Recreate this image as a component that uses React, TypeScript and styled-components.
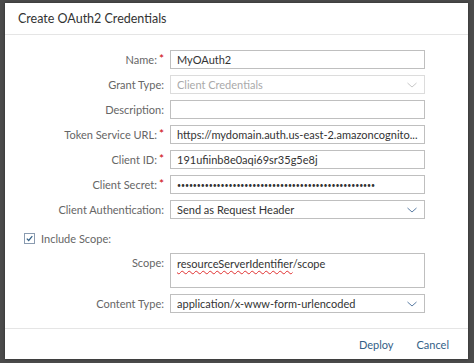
import React from "react";
import styled, {createGlobalStyle} from "styled-components";

const GlobalStyle = createGlobalStyle`
  html, body {
    margin: 0;
    padding: 0;
    background: #4b4b4b;
  }
  body {
    font-family: "Lato", "Liberation Sans", sans-serif;
  }
`;

const Screen = styled.div`
  width: 474px;
  height: 363px;
  padding: 3px 6px 4px 5px;
  box-sizing: border-box;
  background: #4b4b4b;
`;

const Dialog = styled.div`
  width: 463px;
  height: 356px;
  background: #fff;
  display: flex;
  flex-direction: column;
  box-shadow: 0 0 3px rgba(0, 0, 0, 0.4);
`;

const Header = styled.div`
  height: 31px;
  flex: none;
  display: flex;
  align-items: center;
  padding: 0 13px;
  border-bottom: 1px solid #e5e5e5;
  font-size: 12.5px;
  color: #333;
`;

const Body = styled.div`
  flex: 1;
  padding: 15px 0 0 0;
`;

const Form = styled.div`
  display: grid;
  grid-template-columns: 159px 255px;
  column-gap: 6px;
  row-gap: 6px;
  align-items: start;
`;

const Label = styled.div`
  height: 19px;
  display: flex;
  align-items: center;
  justify-content: flex-end;
  font-size: 11px;
  color: #666;
  white-space: nowrap;
`;

const Required = styled.span`
  color: #c00;
  margin-left: 2px;
  font-size: 12px;
  line-height: 1;
  align-self: flex-start;
  margin-top: 3px;
`;

type FieldProps = {
  disabled?: boolean;
  tall?: boolean;
};

const Field = styled.div<FieldProps>`
  height: ${({tall}) => (tall ? "35px" : "19px")};
  box-sizing: border-box;
  border: 1px solid ${({disabled}) => (disabled ? "#dcdcdc" : "#bfbfbf")};
  background: #fff;
  display: flex;
  align-items: ${({tall}) => (tall ? "flex-start" : "center")};
  padding: ${({tall}) => (tall ? "3px 6px 0 6px" : "0 6px")};
  font-size: 11px;
  color: ${({disabled}) => (disabled ? "#aaa" : "#333")};
  white-space: nowrap;
  overflow: hidden;
`;

const Value = styled.span`
  flex: 1;
  overflow: hidden;
`;

const Dots = styled.span`
  font-size: 7px;
  letter-spacing: -0.1px;
  color: #333;
`;

const Misspelled = styled.span`
  text-decoration: underline wavy #e03030;
  text-decoration-thickness: 1px;
  text-underline-offset: 2px;
`;

const Chevron = ({muted}: {muted?: boolean}) => (
  <svg width="12" height="8" viewBox="0 0 12 8">
    <path
      d="M1.5 2 L6 6 L10.5 2"
      fill="none"
      stroke={muted ? "#c8c8c8" : "#5a7ca3"}
      strokeWidth="1"
    />
  </svg>
);

const ScopeToggle = styled.label`
  display: flex;
  align-items: center;
  gap: 6px;
  margin: 13px 0 8px 19px;
  font-size: 11px;
  color: #666;
`;

const Box = styled.span`
  width: 11px;
  height: 11px;
  border: 1px solid #8a9bb0;
  box-sizing: border-box;
  display: flex;
  align-items: center;
  justify-content: center;
  background: #fff;
`;

const Footer = styled.div`
  height: 30px;
  flex: none;
  border-top: 1px solid #e5e5e5;
  display: flex;
  align-items: center;
  justify-content: flex-end;
  gap: 23px;
  padding-right: 19px;
`;

const LinkButton = styled.button`
  border: none;
  background: none;
  padding: 0;
  font-family: inherit;
  font-size: 11px;
  color: #346187;
  cursor: pointer;
`;

type RowProps = {
  label: string;
  required?: boolean;
  children: React.ReactNode;
};

const Row = ({label, required, children}: RowProps) => (
  <>
    <Label>
      {label}
      {required && <Required>*</Required>}
    </Label>
    {children}
  </>
);

const App = () => (
  <>
    <GlobalStyle />
    <Screen>
      <Dialog>
        <Header>Create OAuth2 Credentials</Header>
        <Body>
          <Form>
            <Row label="Name:" required>
              <Field>MyOAuth2</Field>
            </Row>
            <Row label="Grant Type:">
              <Field disabled>
                <Value>Client Credentials</Value>
                <Chevron muted />
              </Field>
            </Row>
            <Row label="Description:">
              <Field />
            </Row>
            <Row label="Token Service URL:" required>
              <Field>https://mydomain.auth.us-east-2.amazoncognito...</Field>
            </Row>
            <Row label="Client ID:" required>
              <Field>191ufiinb8e0aqi69sr35g5e8j</Field>
            </Row>
            <Row label="Client Secret:" required>
              <Field>
                <Dots>{"•".repeat(50)}</Dots>
              </Field>
            </Row>
            <Row label="Client Authentication:">
              <Field>
                <Value>Send as Request Header</Value>
                <Chevron />
              </Field>
            </Row>
          </Form>
          <ScopeToggle>
            <Box>
              <svg width="9" height="9" viewBox="0 0 9 9">
                <path d="M1.8 4.6 L3.7 6.5 L7.3 2.2" fill="none" stroke="#346187" strokeWidth="1.2" />
              </svg>
            </Box>
            Include Scope:
          </ScopeToggle>
          <Form>
            <Row label="Scope:">
              <Field tall>
                <span>
                  <Misspelled>resourceServerIdentifier</Misspelled>/scope
                </span>
              </Field>
            </Row>
            <Row label="Content Type:">
              <Field>
                <Value>application/x-www-form-urlencoded</Value>
                <Chevron />
              </Field>
            </Row>
          </Form>
        </Body>
        <Footer>
          <LinkButton>Deploy</LinkButton>
          <LinkButton>Cancel</LinkButton>
        </Footer>
      </Dialog>
    </Screen>
  </>
);

export default App;
